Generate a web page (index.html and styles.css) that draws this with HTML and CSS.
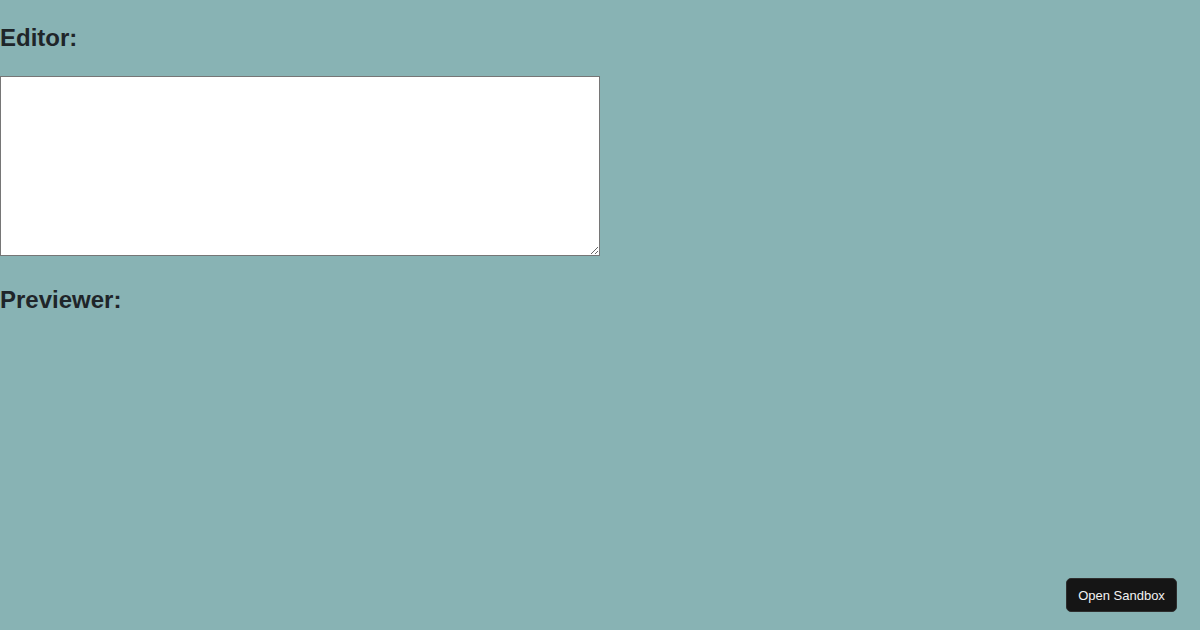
FILE: index.html
```html
<!DOCTYPE html>
<html>
<head>
<meta charset="utf-8">
<link rel="stylesheet" href="styles.css">
</head>
<body>
<div class="app">
  <h2 class="title">Editor:</h2>
  <textarea class="editor"></textarea>
  <h2 class="title preview-title">Previewer:</h2>
  <div class="preview"></div>
</div>
<button class="sandbox-btn">Open Sandbox</button>
</body>
</html>
```

FILE: styles.css
```css
html, body {
  margin: 0;
  padding: 0;
  height: 100%;
}
body {
  background: #88b3b4;
  font-family: "Liberation Sans", Arial, sans-serif;
  color: #1f2529;
}
.app {
  display: flex;
  flex-direction: column;
  align-items: flex-start;
  padding-top: 24px;
}
.title {
  font-size: 24px;
  line-height: 28px;
  font-weight: bold;
  margin: 0;
  color: #1f2529;
}
.editor {
  display: block;
  box-sizing: border-box;
  width: 600px;
  height: 180px;
  margin: 24px 0 0 0;
  border: 1px solid #767676;
  background: #fff;
  padding: 2px;
}
.preview-title {
  margin-top: 30px;
}
.sandbox-btn {
  position: fixed;
  right: 23px;
  bottom: 18px;
  width: 111px;
  height: 34px;
  background: #151515;
  color: #f2f2f2;
  border: 1px solid #2e2e2e;
  border-radius: 5px;
  font-family: "Liberation Sans", Arial, sans-serif;
  font-size: 13px;
  padding: 0;
  cursor: pointer;
}
```
